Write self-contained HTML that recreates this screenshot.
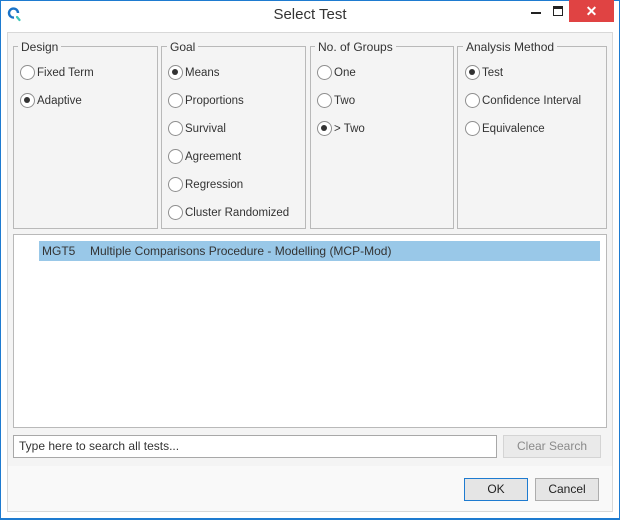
<!DOCTYPE html>
<html><head><meta charset="utf-8"><style>
*{box-sizing:border-box;margin:0;padding:0}
body{width:620px;height:520px;background:#fff;font-family:"Liberation Sans",sans-serif;font-size:12px;color:#333;position:relative;overflow:hidden}
.abs{position:absolute}
.grp{position:absolute;border:1px solid #b9b9b9;top:46px;height:183px}
.gl{position:absolute;top:40px;background:#f4f4f4;padding:0 3px;font-size:12px;line-height:14px;color:#333}
.r{position:absolute;font-size:11.5px;line-height:14px;padding-left:17px;color:#333;white-space:nowrap}
.r:before{content:"";position:absolute;left:0;top:-1px;width:13px;height:13px;border:1px solid #8f8f8f;border-radius:50%;background:#fff}
.r.on:after{content:"";position:absolute;left:3.5px;top:2.5px;width:6px;height:6px;border-radius:50%;background:#333}
.btn{position:absolute;border:1px solid #adadad;background:#e5e5e5;text-align:center;line-height:20px;font-size:12px;color:#222}
</style></head><body>
<div class="abs" style="left:0;top:0;width:620px;height:520px;border:1px solid #1e7bd0;border-bottom-width:2px"></div>
<svg class="abs" style="left:7px;top:5px" width="16" height="18" viewBox="0 0 16 18"><path d="M7 12.5A4.5 4.5 0 1 1 11 8" fill="none" stroke="#1a73c8" stroke-width="2.4"/><path d="M10 12l2.5 3" stroke="#3fc6b8" stroke-width="2.2" stroke-linecap="round"/></svg>
<div class="abs" style="left:0;top:6px;width:620px;text-align:center;font-size:15px;color:#333">Select Test</div>
<div class="abs" style="left:531px;top:12px;width:10px;height:2px;background:#222"></div>
<div class="abs" style="left:553px;top:6px;width:10px;height:10px;border:1.5px solid #222;border-top-width:3px"></div>
<div class="abs" style="left:569px;top:0px;width:45px;height:22px;background:#e04343;color:#fff;text-align:center;font-size:14px;font-weight:bold;line-height:22px">✕</div>

<div class="abs" style="left:7px;top:32px;width:606px;height:480px;border:1px solid #d8d8d8;background:#f9f9f9"></div>
<div class="abs" style="left:8px;top:33px;width:604px;height:433px;background:#f4f4f4"></div>

<div class="grp" style="left:13px;width:145px"></div>
<div class="gl" style="left:18px">Design</div>
<div class="r" style="left:20px;top:66px">Fixed Term</div>
<div class="r on" style="left:20px;top:94px">Adaptive</div>

<div class="grp" style="left:161px;width:145px"></div>
<div class="gl" style="left:167px">Goal</div>
<div class="r on" style="left:168px;top:66px">Means</div>
<div class="r" style="left:168px;top:94px">Proportions</div>
<div class="r" style="left:168px;top:122px">Survival</div>
<div class="r" style="left:168px;top:150px">Agreement</div>
<div class="r" style="left:168px;top:178px">Regression</div>
<div class="r" style="left:168px;top:206px">Cluster Randomized</div>

<div class="grp" style="left:310px;width:144px"></div>
<div class="gl" style="left:315px">No. of Groups</div>
<div class="r" style="left:317px;top:66px">One</div>
<div class="r" style="left:317px;top:94px">Two</div>
<div class="r on" style="left:317px;top:122px">&gt; Two</div>

<div class="grp" style="left:457px;width:150px"></div>
<div class="gl" style="left:463px">Analysis Method</div>
<div class="r on" style="left:465px;top:66px">Test</div>
<div class="r" style="left:465px;top:94px">Confidence Interval</div>
<div class="r" style="left:465px;top:122px">Equivalence</div>

<div class="abs" style="left:13px;top:234px;width:594px;height:194px;border:1px solid #b9b9b9;background:#fff"></div>
<div class="abs" style="left:39px;top:241px;width:561px;height:20px;background:#99c8e8;font-size:12px;line-height:20px;color:#333;white-space:nowrap"><span style="position:absolute;left:3px">MGT5</span><span style="position:absolute;left:51px">Multiple Comparisons Procedure - Modelling (MCP-Mod)</span></div>

<div class="abs" style="left:13px;top:435px;width:484px;height:23px;border:1px solid #a8a8a8;background:#fff;padding-left:5px;line-height:21px;font-size:12px;color:#333">Type here to search all tests...</div>
<div class="btn" style="left:503px;top:435px;width:98px;height:23px;background:#eaeaea;border-color:#d4d4d4;color:#8a8a8a;line-height:21px">Clear Search</div>

<div class="btn" style="left:464px;top:478px;width:64px;height:23px;border-color:#1e7bd0;line-height:21px">OK</div>
<div class="btn" style="left:535px;top:478px;width:64px;height:23px;line-height:21px">Cancel</div>
</body></html>
